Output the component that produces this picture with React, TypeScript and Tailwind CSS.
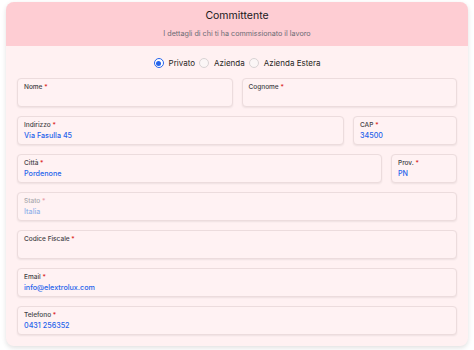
import { ReactNode } from 'react';

function Field({ label, value, disabled, className }: { label: string; value?: string; disabled?: boolean; className?: string }) {
    return (
        <div className={`h-[29px] rounded-[4px] border border-[#ecdcdd] bg-[#fff2f3] px-[6px] pt-[4px] shadow-[0_1px_2px_rgba(0,0,0,0.07)] ${className ?? ''}`}>
            <div className={`text-[6.5px] leading-[9px] font-medium ${disabled ? 'text-[#a8a8ac]' : 'text-[#3f3f46]'}`}>
                {label}
                <span className={disabled ? 'text-[#e8a0a8]' : 'text-[#dc2626]'}> *</span>
            </div>
            {value && (
                <div className={`text-[7.2px] leading-[11px] font-medium ${disabled ? 'text-[#93b2ea]' : 'text-[#2563eb]'}`}>{value}</div>
            )}
        </div>
    );
}

function Radio({ checked, children }: { checked?: boolean; children: ReactNode }) {
    return (
        <label className="flex items-center gap-[5px]">
            <span
                className={`flex h-[10px] w-[10px] items-center justify-center rounded-full border ${checked ? 'border-[#2563eb] bg-white' : 'border-[#d9d3d4] bg-[#fbf6f6]'}`}
            >
                {checked && <span className="h-[5px] w-[5px] rounded-full bg-[#2563eb]" />}
            </span>
            <span className="text-[8px] text-[#1f1f23]">{children}</span>
        </label>
    );
}

export default function App() {
    return (
        <div className="min-h-[350px] bg-white px-[6px] pt-[2px]" style={{ fontFamily: 'Inter, "Liberation Sans", sans-serif' }}>
            <div className="overflow-hidden rounded-[8px] bg-[#fff1f2] shadow-[0_2px_5px_rgba(0,0,0,0.12)]">
                {/* Header */}
                <div className="flex h-[44px] flex-col items-center bg-[#fecdd3] pt-[6px]">
                    <div className="text-[10.5px] leading-[16px] text-[#18181b]">Committente</div>
                    <div className="mt-[5px] text-[7.2px] leading-[10px] text-[#6b6b73]">I dettagli di chi ti ha commissionato il lavoro</div>
                </div>

                <div className="px-[11px] pb-[11px]">
                    <div className="flex h-[32px] items-center justify-center gap-[4px] pt-[2px]">
                        <Radio checked>Privato</Radio>
                        <Radio>Azienda</Radio>
                        <Radio>Azienda Estera</Radio>
                    </div>

                    <div className="flex flex-col gap-[9px]">
                        <div className="grid grid-cols-2 gap-[9px]">
                            <Field label="Nome" />
                            <Field label="Cognome" />
                        </div>
                        <div className="flex gap-[9px]">
                            <Field label="Indirizzo" value="Via Fasulla 45" className="flex-1" />
                            <Field label="CAP" value="34500" className="w-[104px]" />
                        </div>
                        <div className="flex gap-[9px]">
                            <Field label="Città" value="Pordenone" className="flex-1" />
                            <Field label="Prov." value="PN" className="w-[66px]" />
                        </div>
                        <Field label="Stato" value="Italia" disabled />
                        <Field label="Codice Fiscale" />
                        <Field label="Email" value="info@elextrolux.com" />
                        <Field label="Telefono" value="0431 256352" />
                    </div>
                </div>
            </div>
        </div>
    );
}
